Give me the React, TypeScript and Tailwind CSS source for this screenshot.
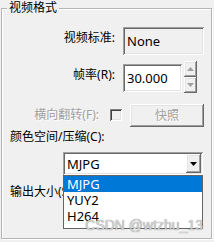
import React from 'react';

const sunken =
  'shadow-[inset_1px_1px_0_#a0a0a0,inset_-1px_-1px_0_#ffffff,inset_2px_2px_0_#696969,inset_-2px_-2px_0_#e3e3e3]';
const raised =
  'shadow-[inset_-1px_-1px_0_#696969,inset_1px_1px_0_#ffffff,inset_-2px_-2px_0_#a0a0a0,inset_2px_2px_0_#e3e3e3]';

function Arrow({ up, color }: { up?: boolean; color: string }) {
  return (
    <svg width="7" height="4" viewBox="0 0 7 4">
      <polygon points={up ? '3.5,0 7,4 0,4' : '0,0 7,0 3.5,4'} fill={color} />
    </svg>
  );
}

export default function App() {
  const formats = ['MJPG', 'YUY2', 'H264'];

  return (
    <div className="relative w-[214px] h-[242px] overflow-hidden bg-[#f0f0f0] text-black text-[12px] leading-[16px] font-['Noto_Sans','Noto_Sans_CJK_SC',sans-serif]">
      {/* 视频格式 group */}
      <div className="relative ml-[1px] mt-[8px] w-[211px] h-[231px] border border-[#b4b4b4] shadow-[inset_1px_1px_0_#ffffff,1px_1px_0_#ffffff]">
        <span className="absolute -top-[9px] left-[5px] px-[2px] bg-[#f0f0f0]">视频格式</span>

        <div className="flex flex-col">
          {/* 视频标准 */}
          <div className="flex mt-[18px] h-[28px]">
            <div className="w-[113px] text-right pt-[3px]">视频标准:</div>
            <div className={`ml-[8px] w-[81px] h-[28px] bg-[#f0f0f0] pl-[4px] flex items-center text-[13px] ${sunken}`}>
              None
            </div>
          </div>

          {/* 帧率 */}
          <div className="flex items-start mt-[6px] h-[32px]">
            <div className="w-[113px] text-right mt-[6px]">帧率(R):</div>
            <div className={`ml-[8px] mt-[3px] w-[59px] h-[28px] bg-white pl-[4px] flex items-center text-[13px] ${sunken}`}>
              30.000
            </div>
            <div className="ml-[2px] w-[13px] flex flex-col">
              <div className={`h-[16px] flex items-center justify-center ${raised}`}>
                <Arrow up color="#a0a0a0" />
              </div>
              <div className={`h-[16px] flex items-center justify-center ${raised}`}>
                <Arrow color="#a0a0a0" />
              </div>
            </div>
          </div>

          {/* 横向翻转 / 快照 */}
          <div className="flex items-start mt-[11px] h-[23px]">
            <div className="w-[108px] text-right pr-[11px] mt-[3px] text-[#a0a0a0] [text-shadow:1px_1px_0_#ffffff]">
              横向翻转(F):
            </div>
            <div className="mt-[5px] w-[12px] h-[12px] bg-[#f0f0f0] shadow-[inset_1px_1px_0_#808080,inset_-1px_-1px_0_#ffffff,inset_2px_2px_0_#404040,inset_-2px_-2px_0_#e3e3e3]" />
            <div className={`ml-[8px] w-[74px] h-[23px] flex items-center justify-center text-[#a0a0a0] [text-shadow:1px_1px_0_#ffffff] ${raised}`}>
              快照
            </div>
          </div>

          {/* 颜色空间/压缩 */}
          <div className="mt-[2px] pl-[8px]">颜色空间/压缩(C):</div>

          <div className={`relative mt-[7px] ml-[61px] w-[140px] h-[23px] bg-white flex items-center ${sunken}`}>
            <span className="flex-1 pl-[4px] text-[13px]">MJPG</span>
            <div className={`mr-[2px] w-[15px] h-[19px] bg-[#f0f0f0] flex items-center justify-center ${raised}`}>
              <Arrow color="#000000" />
            </div>

            {/* open list */}
            <div className="absolute top-full left-0 z-10 w-[140px] h-[54px] bg-white border border-[#646464] text-[13px]">
              {formats.map((f, i) => (
                <div
                  key={f}
                  className={`h-[16px] leading-[16px] pl-[3px] ${i === 0 ? 'bg-[#0078d7] text-white' : ''}`}
                >
                  {f}
                </div>
              ))}
            </div>
          </div>

          {/* 输出大小 */}
          <div className="mt-[9px] pl-[8px]">输出大小(S):</div>
        </div>
      </div>

      <span className="absolute right-[11px] bottom-[9px] z-20 text-[14px] leading-[16px] text-[#d4d4d4] [text-shadow:0_0_1px_#707070] font-['Liberation_Sans',Arial,sans-serif]">
        CSDN @wtzhu_13
      </span>
    </div>
  );
}
